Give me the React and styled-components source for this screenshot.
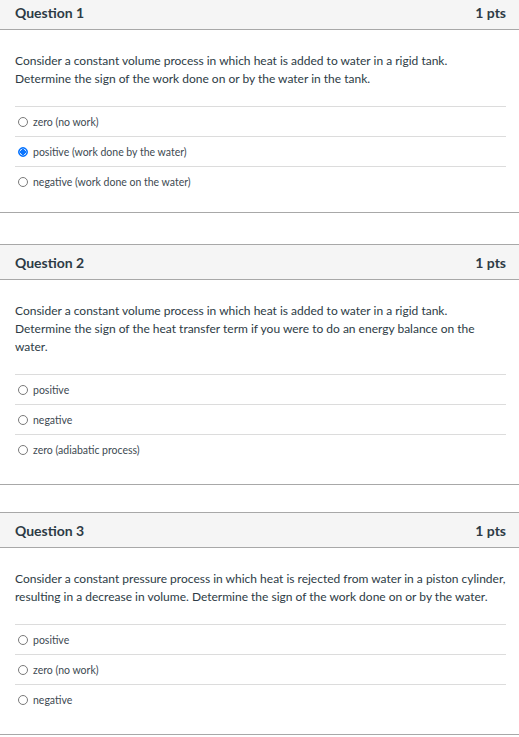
import React from "react";
import styled, { createGlobalStyle } from "styled-components";

const Global = createGlobalStyle`
  html, body { margin: 0; padding: 0; background: #fff; }
  body { font-family: Lato, "Noto Sans", sans-serif; color: #2d3b45; }
`;

const Page = styled.div`
  margin-top: -6px;
  width: 519px;
  overflow: hidden;
`;

const Question = styled.section`
  border-bottom: 1px solid #a8a8a8;
  padding-bottom: ${(p) => p.$pb}px;
  margin-bottom: ${(p) => p.$mb}px;
`;

const Header = styled.header`
  display: flex;
  justify-content: space-between;
  align-items: center;
  height: 36px;
  box-sizing: border-box;
  padding: 0 13px 0 15px;
  background: #f5f5f5;
  border-top: 1px solid #a8a8a8;
  border-bottom: 1px solid #a8a8a8;
  font-size: 14px;
  font-weight: 700;
  color: #2d3b45;
`;

const Body = styled.div`
  padding: 22px 13px 0 15px;
`;

const Text = styled.p`
  margin: 0 0 18px;
  font-size: 12px;
  line-height: 18px;
  color: #2d3b45;
`;

const Options = styled.div`
  display: flex;
  flex-direction: column;
`;

const Option = styled.label`
  display: flex;
  align-items: center;
  gap: 5px;
  height: 30px;
  box-sizing: border-box;
  padding-left: 3px;
  border-top: 1px solid #dcdcdc;
  font-size: 10.5px;
  color: #404a52;
`;

const Radio = styled.span`
  width: 10px;
  height: 10px;
  box-sizing: border-box;
  border-radius: 50%;
  border: 1px solid ${(p) => (p.$on ? "#0b76ff" : "#7a7a7a")};
  background: ${(p) =>
    p.$on
      ? "radial-gradient(circle, #0b76ff 0 2.6px, #fff 3px 3.4px, #0b76ff 3.6px)"
      : "#fff"};
  flex: none;
`;

const questions = [
  {
    n: 1,
    text:
      "Consider a constant volume process in which heat is added to water in a rigid tank. Determine the sign of the work done on or by the water in the tank.",
    options: ["zero (no work)", "positive (work done by the water)", "negative (work done on the water)"],
    sel: 1,
    pb: 16,
    mb: 31,
  },
  {
    n: 2,
    text:
      "Consider a constant volume process in which heat is added to water in a rigid tank. Determine the sign of the heat transfer term if you were to do an energy balance on the water.",
    options: ["positive", "negative", "zero (adiabatic process)"],
    sel: -1,
    pb: 20,
    mb: 27,
  },
  {
    n: 3,
    text:
      "Consider a constant pressure process in which heat is rejected from water in a piston cylinder, resulting in a decrease in volume. Determine the sign of the work done on or by the water.",
    options: ["positive", "zero (no work)", "negative"],
    sel: -1,
    pb: 20,
    mb: 0,
  },
];

export default function App() {
  return (
    <>
      <Global />
      <Page>
        {questions.map((q) => (
          <Question key={q.n} $pb={q.pb} $mb={q.mb}>
            <Header>
              <span>Question {q.n}</span>
              <span>1 pts</span>
            </Header>
            <Body>
              <Text>{q.text}</Text>
              <Options>
                {q.options.map((o, i) => (
                  <Option key={o}>
                    <Radio $on={i === q.sel} />
                    {o}
                  </Option>
                ))}
              </Options>
            </Body>
          </Question>
        ))}
      </Page>
    </>
  );
}
